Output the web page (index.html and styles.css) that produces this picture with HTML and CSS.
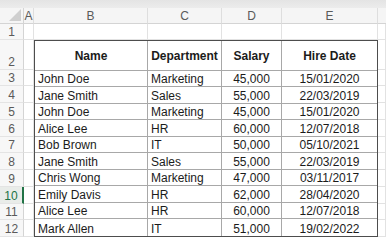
FILE: index.html
```html
<!DOCTYPE html>
<html>
<head>
<meta charset="utf-8">
<link rel="stylesheet" href="styles.css">
</head>
<body>
<div class="sheet">
  <div class="band"></div>
  <div class="corner"><span class="tri"></span></div>
  <div class="ch">A</div><div class="ch">B</div><div class="ch">C</div><div class="ch">D</div><div class="ch">E</div><div class="ch last"></div>

  <div class="rh">1</div><div class="c"></div><div class="c"></div><div class="c"></div><div class="c"></div><div class="c"></div><div class="c"></div>
  <div class="rh">2</div><div class="c"></div><div class="c"></div>
  <div class="rh">3</div><div class="c"></div><div class="c"></div>
  <div class="rh">4</div><div class="c"></div><div class="c"></div>
  <div class="rh">5</div><div class="c"></div><div class="c"></div>
  <div class="rh">6</div><div class="c"></div><div class="c"></div>
  <div class="rh">7</div><div class="c"></div><div class="c"></div>
  <div class="rh">8</div><div class="c"></div><div class="c"></div>
  <div class="rh">9</div><div class="c"></div><div class="c"></div>
  <div class="rh sel">10</div><div class="c"></div><div class="c"></div>
  <div class="rh">11</div><div class="c"></div><div class="c"></div>
  <div class="rh">12</div><div class="c"></div><div class="c"></div>

  <div class="tbl">
    <div class="th">Name</div><div class="th">Department</div><div class="th">Salary</div><div class="th">Hire Date</div>
    <div class="td">John Doe</div><div class="td">Marketing</div><div class="td n">45,000</div><div class="td n">15/01/2020</div>
    <div class="td">Jane Smith</div><div class="td">Sales</div><div class="td n">55,000</div><div class="td n">22/03/2019</div>
    <div class="td">John Doe</div><div class="td">Marketing</div><div class="td n">45,000</div><div class="td n">15/01/2020</div>
    <div class="td">Alice Lee</div><div class="td">HR</div><div class="td n">60,000</div><div class="td n">12/07/2018</div>
    <div class="td">Bob Brown</div><div class="td">IT</div><div class="td n">50,000</div><div class="td n">05/10/2021</div>
    <div class="td">Jane Smith</div><div class="td">Sales</div><div class="td n">55,000</div><div class="td n">22/03/2019</div>
    <div class="td">Chris Wong</div><div class="td">Marketing</div><div class="td n">47,000</div><div class="td n">03/11/2017</div>
    <div class="td">Emily Davis</div><div class="td">HR</div><div class="td n">62,000</div><div class="td n">28/04/2020</div>
    <div class="td">Alice Lee</div><div class="td">HR</div><div class="td n">60,000</div><div class="td n">12/07/2018</div>
    <div class="td b">Mark Allen</div><div class="td b">IT</div><div class="td n b">51,000</div><div class="td n b">19/02/2022</div>
  </div>
</div>
</body>
</html>
```

FILE: styles.css
```css
* { box-sizing: border-box; }
html, body { margin: 0; padding: 0; background: #fff; }
body {
  width: 386px;
  height: 240px;
  overflow: hidden;
  font-family: "Liberation Sans", Arial, sans-serif;
  font-size: 12px;
  color: #1b1b1b;
}
.sheet {
  display: grid;
  grid-template-columns: 24px 10px 114px 74px 60px 96px 1fr;
  grid-template-rows: 8px 16px 16px 29.5px repeat(10, 16.75px) 1fr;
  height: 240px;
}
.band {
  grid-column: 1 / -1;
  background: linear-gradient(#e4e4e4, #ececec);
}
.corner {
  background: #f5f5f5;
  border-bottom: 1px solid #d4d4d4;
  border-right: 1px solid #d4d4d4;
  display: flex;
  justify-content: flex-end;
  align-items: flex-end;
  padding: 0 2px 2px 0;
}
.tri {
  width: 0;
  height: 0;
  border-left: 12px solid transparent;
  border-bottom: 12px solid #cfcfcf;
}
.ch {
  background: #f5f5f5;
  border-bottom: 1px solid #d4d4d4;
  border-right: 1px solid #dedede;
  color: #5a5a5a;
  font-size: 12px;
  display: flex;
  align-items: center;
  justify-content: center;
  line-height: 1;
}
.ch.last { border-right: none; }
.rh {
  background: #f7f7f7;
  border-right: 1px solid #d4d4d4;
  border-bottom: 1px solid #e4e4e4;
  color: #5a5a5a;
  font-size: 12px;
  display: flex;
  align-items: flex-end;
  justify-content: center;
  line-height: 14px;
}
.rh.sel {
  background: #e9ece9;
  color: #217346;
  border-right: 2px solid #217346;
}
.c {
  border-right: 1px solid #e2e2e2;
  border-bottom: 1px solid #e2e2e2;
}
.tbl {
  grid-row: 4 / 15;
  grid-column: 3 / 7;
  display: grid;
  grid-template-columns: 113px 74px 60px 1fr;
  grid-template-rows: 29.5px repeat(10, 1fr);
  border: 1px solid #4d4d4d;
  background: #fff;
}
.th, .td {
  border-right: 1px solid #a8a8a8;
  border-bottom: 1px solid #a8a8a8;
  display: flex;
}
.th:nth-child(4n), .td:nth-child(4n) { border-right: none; }
.td.b { border-bottom: none; }
.th {
  font-weight: bold;
  align-items: center;
  justify-content: center;
  padding-top: 1px;
  line-height: 14px;
}
.td {
  align-items: flex-end;
  padding: 0 4px 0 3px;
  line-height: 13px;
}
.td.n { justify-content: center; padding-left: 0; padding-right: 0; }
```
